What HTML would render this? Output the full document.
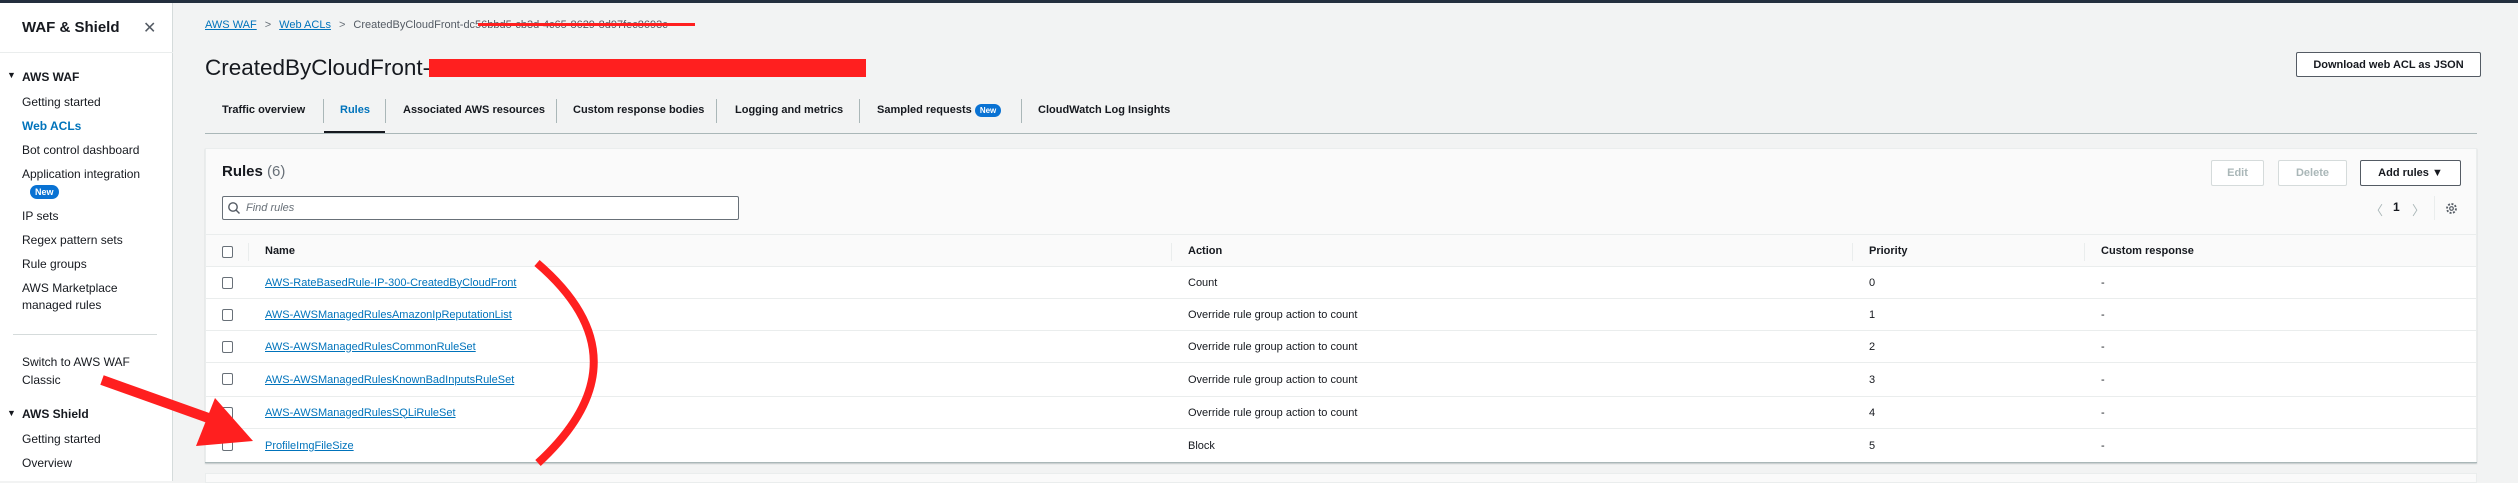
<!DOCTYPE html>
<html><head><meta charset="utf-8">
<style>
*{margin:0;padding:0;box-sizing:border-box}
body{width:2518px;height:481px;overflow:hidden;background:#f2f3f3;font-family:"Liberation Sans",Arial,sans-serif;color:#16191f;position:relative;font-size:12px}
.a{position:absolute;white-space:nowrap}
.side{position:absolute;left:0;top:3px;width:173px;height:478px;background:#fff;border-right:1px solid #d5dbdb}
.nav{position:absolute;left:22px;font-size:12px;color:#16191f;transform:translateY(-50%)}
.b{font-weight:bold}
.lnk{color:#0073bb;text-decoration:underline}
.badge{background:#0972d3;color:#fff;border-radius:8px;font-size:9px;font-weight:bold;padding:2px 5px}
.tab{position:absolute;top:110px;transform:translateY(-50%);font-size:11px;font-weight:bold;color:#16191f}
.tsep{position:absolute;top:99px;width:1px;height:24px;background:#aab7b8}
.btn{position:absolute;background:#fff;border:1px solid #545b64;font-weight:bold;font-size:11px;display:flex;align-items:center;justify-content:center;border-radius:2px}
.dis{border-color:#d5dbdb;color:#aab7b8}
.row{position:absolute;left:206px;width:2270px;height:32px;background:#fff;border-top:1px solid #eaeded}
.cb{position:absolute;left:16px;top:10px;width:11px;height:12px;border:1px solid #687078;border-radius:2px;background:#fff}
.cell{position:absolute;top:50%;transform:translateY(-50%);font-size:11px}
.csep{position:absolute;top:8px;width:1px;height:18px;background:#eaeded}
</style></head><body>
<div class="a" style="left:0;top:0;width:2518px;height:3px;background:#232f3e"></div>
<div class="side">
  <div class="a b" style="left:22px;top:16px;font-size:15px">WAF &amp; Shield</div>
  <div class="a" style="left:143px;top:15px;font-size:16px;color:#545b64">✕</div>
  <div class="a" style="left:0;top:49px;width:173px;height:1px;background:#eaeded"></div>
</div>
<div class="a" style="left:7px;top:70px;font-size:9px">▼</div>
<div class="nav b" style="top:77px">AWS WAF</div>
<div class="nav" style="top:102px">Getting started</div>
<div class="nav b" style="top:126px;color:#0073bb">Web ACLs</div>
<div class="nav" style="top:150px">Bot control dashboard</div>
<div class="nav" style="top:174px">Application integration</div>
<div class="a badge" style="left:30px;top:185px">New</div>
<div class="nav" style="top:216px">IP sets</div>
<div class="nav" style="top:240px">Regex pattern sets</div>
<div class="nav" style="top:264px">Rule groups</div>
<div class="nav" style="top:288px">AWS Marketplace</div>
<div class="nav" style="top:305px">managed rules</div>
<div class="a" style="left:13px;top:334px;width:144px;height:1px;background:#d5dbdb"></div>
<div class="nav" style="top:362px">Switch to AWS WAF</div>
<div class="nav" style="top:380px">Classic</div>
<div class="a" style="left:7px;top:408px;font-size:9px">▼</div>
<div class="nav b" style="top:414px">AWS Shield</div>
<div class="nav" style="top:439px">Getting started</div>
<div class="nav" style="top:463px">Overview</div>

<div class="a" style="left:205px;top:19px;font-size:11px"><span class="lnk">AWS WAF</span><span style="color:#687078;margin:0 8px">&gt;</span><span class="lnk">Web ACLs</span><span style="color:#687078;margin:0 8px">&gt;</span><span style="color:#545b64">CreatedByCloudFront-dc56bbd5-cb3d-4c65-8629-8d97fec8693c</span></div>
<div class="a" style="left:478px;top:23px;width:217px;height:3px;background:#ff1f1f"></div>
<div class="a" style="left:205px;top:55px;font-size:22.5px;color:#16191f">CreatedByCloudFront-</div>
<div class="a" style="left:429px;top:59px;width:437px;height:18px;background:#ff1f1f"></div>
<div class="btn" style="left:2296px;top:52px;width:185px;height:25px">Download web ACL as JSON</div>

<div class="tab" style="left:222px">Traffic overview</div>
<div class="tsep" style="left:323px"></div>
<div class="tab" style="left:340px;color:#0073bb">Rules</div>
<div class="a" style="left:324px;top:131px;width:61px;height:2px;background:#16191f"></div>
<div class="tsep" style="left:385px"></div>
<div class="tab" style="left:403px">Associated AWS resources</div>
<div class="tsep" style="left:556px"></div>
<div class="tab" style="left:573px">Custom response bodies</div>
<div class="tsep" style="left:716px"></div>
<div class="tab" style="left:735px">Logging and metrics</div>
<div class="tsep" style="left:859px"></div>
<div class="tab" style="left:877px">Sampled requests <span class="badge" style="font-size:8px">New</span></div>
<div class="tsep" style="left:1021px"></div>
<div class="tab" style="left:1038px">CloudWatch Log Insights</div>
<div class="a" style="left:205px;top:133px;width:2272px;height:1px;background:#aab7b8"></div>

<div class="a" style="left:205px;top:148px;width:2272px;height:315px;background:#fafafa;border:1px solid #eaeded;border-bottom:1px solid #aab7b8;box-shadow:0 1px 1px rgba(0,28,36,.2)"></div>
<div class="a b" style="left:222px;top:163px;font-size:15px">Rules <span style="font-weight:normal;color:#687078">(6)</span></div>
<div class="btn dis" style="left:2211px;top:160px;width:53px;height:26px">Edit</div>
<div class="btn dis" style="left:2278px;top:160px;width:69px;height:26px">Delete</div>
<div class="btn" style="left:2360px;top:160px;width:101px;height:26px">Add rules&nbsp;▼</div>
<div class="a" style="left:222px;top:196px;width:517px;height:24px;background:#fff;border:1px solid #687078;border-radius:2px"></div>
<svg class="a" style="left:227px;top:201px" width="14" height="14" viewBox="0 0 14 14"><circle cx="6" cy="6" r="4.2" fill="none" stroke="#545b64" stroke-width="1.4"/><path d="M9 9l3.5 3.5" stroke="#545b64" stroke-width="1.4"/></svg>
<div class="a" style="left:246px;top:202px;font-size:11px;font-style:italic;color:#687078">Find rules</div>
<div class="a" style="left:2370px;top:200px;font-size:13px;color:#aab7b8">〈</div>
<div class="a" style="left:2393px;top:200px;font-size:12px;font-weight:bold">1</div>
<div class="a" style="left:2412px;top:200px;font-size:13px;color:#aab7b8">〉</div>
<div class="a" style="left:2434px;top:196px;width:1px;height:24px;background:#eaeded"></div>
<svg class="a" style="left:2445px;top:202px" width="13" height="13" viewBox="0 0 13 13"><circle cx="6.5" cy="6.5" r="4.5" fill="none" stroke="#545b64" stroke-width="1.8" stroke-dasharray="2 1.5"/><circle cx="6.5" cy="6.5" r="1.8" fill="none" stroke="#545b64" stroke-width="1.2"/></svg>

<div class="row" style="top:234px;background:#fafafa;border-top:1px solid #eaeded">
  <div class="cb" style="top:11px"></div>
  <div class="csep" style="left:42px"></div>
  <div class="cell b" style="left:59px">Name</div>
  <div class="csep" style="left:965px"></div>
  <div class="cell b" style="left:982px">Action</div>
  <div class="csep" style="left:1646px"></div>
  <div class="cell b" style="left:1663px">Priority</div>
  <div class="csep" style="left:1878px"></div>
  <div class="cell b" style="left:1895px">Custom response</div>
</div>
<div class="row" style="top:266px"><div class="cb"></div><div class="cell lnk" style="left:59px">AWS-RateBasedRule-IP-300-CreatedByCloudFront</div><div class="cell" style="left:982px">Count</div><div class="cell" style="left:1663px">0</div><div class="cell" style="left:1895px">-</div></div>
<div class="row" style="top:298px"><div class="cb"></div><div class="cell lnk" style="left:59px">AWS-AWSManagedRulesAmazonIpReputationList</div><div class="cell" style="left:982px">Override rule group action to count</div><div class="cell" style="left:1663px">1</div><div class="cell" style="left:1895px">-</div></div>
<div class="row" style="top:330px"><div class="cb"></div><div class="cell lnk" style="left:59px">AWS-AWSManagedRulesCommonRuleSet</div><div class="cell" style="left:982px">Override rule group action to count</div><div class="cell" style="left:1663px">2</div><div class="cell" style="left:1895px">-</div></div>
<div class="row" style="top:362px;height:34px"><div class="cb"></div><div class="cell lnk" style="left:59px">AWS-AWSManagedRulesKnownBadInputsRuleSet</div><div class="cell" style="left:982px">Override rule group action to count</div><div class="cell" style="left:1663px">3</div><div class="cell" style="left:1895px">-</div></div>
<div class="row" style="top:396px"><div class="cb"></div><div class="cell lnk" style="left:59px">AWS-AWSManagedRulesSQLiRuleSet</div><div class="cell" style="left:982px">Override rule group action to count</div><div class="cell" style="left:1663px">4</div><div class="cell" style="left:1895px">-</div></div>
<div class="row" style="top:428px;height:34px"><div class="cb"></div><div class="cell lnk" style="left:59px">ProfileImgFileSize</div><div class="cell" style="left:982px">Block</div><div class="cell" style="left:1663px">5</div><div class="cell" style="left:1895px">-</div></div>
<div class="a" style="left:205px;top:462px;width:2272px;height:1px;background:#aab7b8"></div>
<div class="a" style="left:205px;top:473px;width:2272px;height:10px;background:#fafafa;border:1px solid #eaeded"></div>

<svg class="a" style="left:0;top:0" width="2518" height="481">
  <path d="M537 263 Q650 360 538 463" fill="none" stroke="#ff1f1f" stroke-width="8"/>
  <path d="M102 380 L228 425" stroke="#ff1f1f" stroke-width="10"/>
  <polygon points="215,398 196,446 253,441" fill="#ff1f1f"/>
</svg>
</body></html>
